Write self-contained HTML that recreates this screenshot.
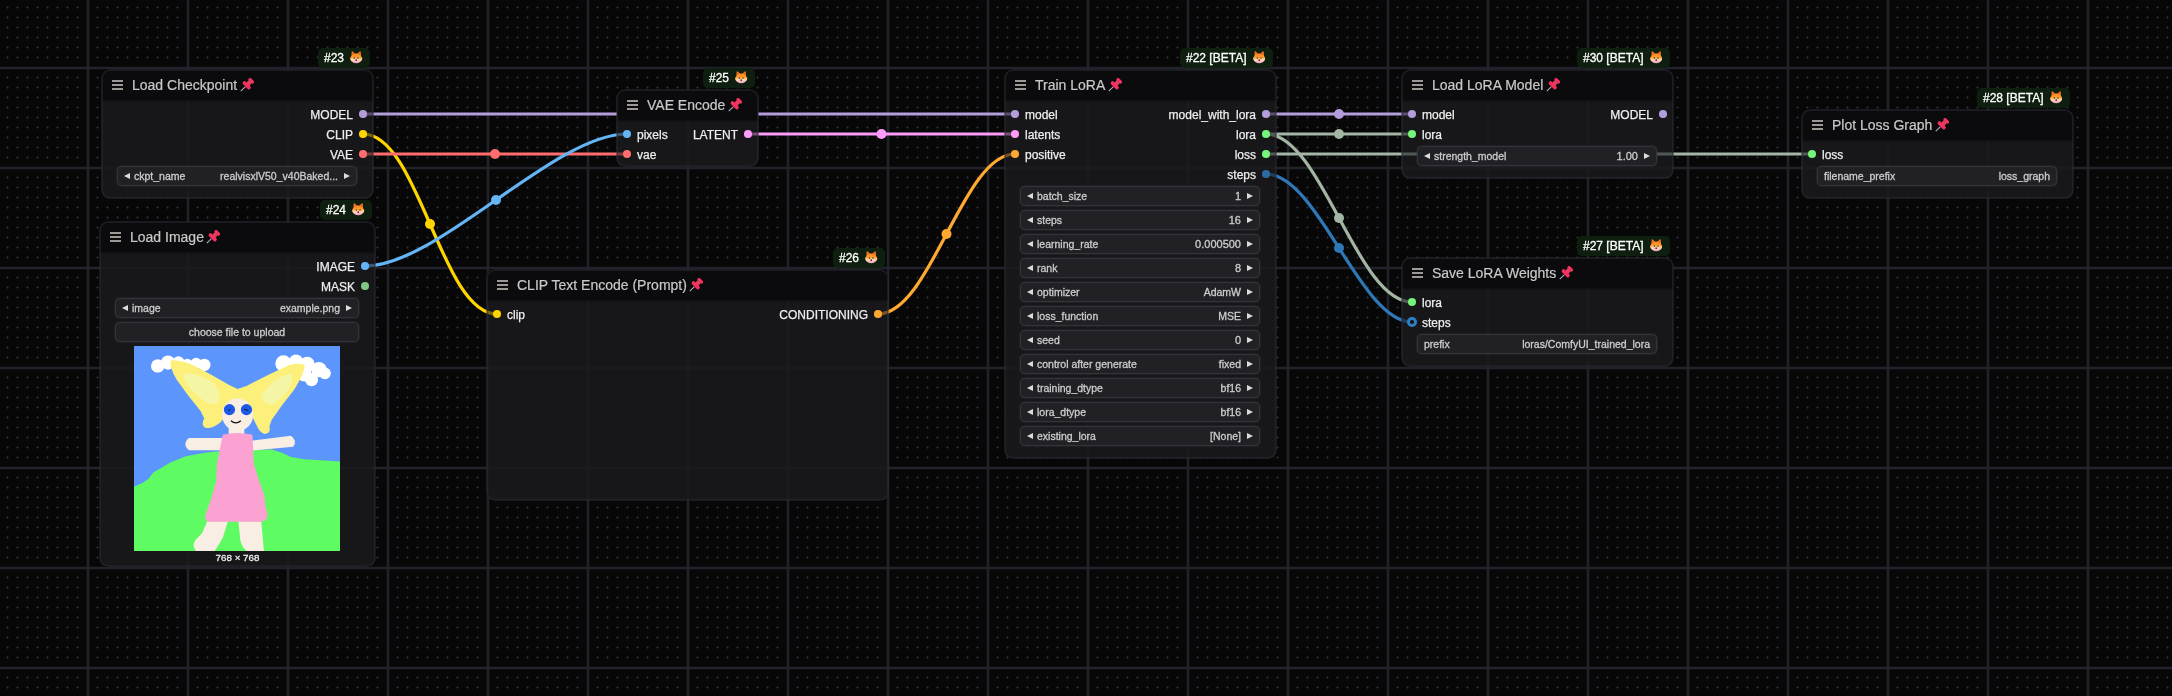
<!DOCTYPE html>
<html lang="en"><head><meta charset="utf-8"><title>ComfyUI - Train LoRA workflow</title>
<style>
html,body{margin:0;padding:0;}
body{width:2172px;height:696px;overflow:hidden;background:#070708;position:relative;font-family:"Liberation Sans",Arial,sans-serif;}
#grid,#links{position:absolute;left:0;top:0;width:2172px;height:696px;display:block;}
.node,.badge{will-change:transform;}
.node{position:absolute;box-sizing:border-box;border-radius:9px;overflow:hidden;}
.node:after{content:"";position:absolute;left:0;top:0;right:0;bottom:0;border:2px solid rgba(44,44,54,0.5);border-radius:9px;pointer-events:none;}
.node .title{position:absolute;left:1px;top:1px;right:1px;height:30px;background:#0b0b0d;}
.node .body{overflow:hidden;position:absolute;left:1px;top:31px;right:1px;bottom:1px;background:rgba(26,26,29,0.86);}
.node .body:before{content:"";position:absolute;left:0;right:0;top:0;height:2px;background:linear-gradient(rgba(11,11,13,0.8),rgba(11,11,13,0));}
.ham{position:absolute;left:10px;top:10.3px;width:11px;height:10px;}
.ham i{position:absolute;left:0;width:11px;height:1.5px;background:#9e9994;}
.tt{position:absolute;left:30px;top:0;height:30px;line-height:31px;font-size:14px;color:#c9c9c9;-webkit-text-stroke:0.2px #c9c9c9;white-space:nowrap;}
.pin{display:inline-block;vertical-align:middle;width:15px;height:15px;margin-left:1.5px;margin-top:-2px}
.sl{-webkit-text-stroke:0.25px #eee;position:absolute;font-size:12px;line-height:14px;color:#eeeeee;white-space:nowrap;}
.sl.in{left:20px;}
.sl.out{right:20px;text-align:right;}
.dot{position:absolute;border-radius:50%;}
.w{position:absolute;left:15px;height:20px;box-sizing:border-box;border:1px solid #34343d;border-radius:4.5px;background:#212125;box-shadow:0 0 0 1px rgba(52,52,61,0.3);font-size:10.5px;line-height:19px;color:#cccccc;-webkit-text-stroke:0.3px #ccc;white-space:nowrap;}
.w .l{position:absolute;left:16px;top:0;}
.w .v{position:absolute;right:18px;top:0;}
.w .v.n{font-size:11px;}
.w.na .l{left:6px;}
.w.na .v{right:6px;}
.w .c{position:absolute;left:0;right:0;top:0;text-align:center;}
.w .al,.w .ar{position:absolute;top:5.8px;width:0;height:0;border-top:3.6px solid transparent;border-bottom:3.6px solid transparent;}
.w .al{left:6px;border-right:6.4px solid #dcdcdc;}
.w .ar{right:5.6px;border-left:6.4px solid #dcdcdc;}
.badge{position:absolute;height:20px;box-sizing:border-box;border-radius:5px;background:#0e1f10;color:#fff;-webkit-text-stroke:0.3px #fff;font-size:12px;line-height:21px;padding:0 7.4px 0 6px;white-space:nowrap;}
.fox{display:inline-block;vertical-align:middle;width:12.4px;height:12.4px;margin-left:6.4px;margin-top:-3px;}
.ov{position:absolute;display:block;opacity:0.3;}
.dim{position:absolute;left:0;width:100%;text-align:center;font-size:9.8px;color:#eee;-webkit-text-stroke:0.3px #eee;line-height:12px;}
</style></head><body>
<svg id="grid" width="2172" height="696" viewBox="0 0 2172 696"><defs>
<pattern id="dp" x="0" y="0" width="10" height="10" patternUnits="userSpaceOnUse"><rect x="6" y="7" width="3" height="1" fill="#1f2025"/><rect x="7" y="6" width="1" height="3" fill="#1f2025"/><rect x="7" y="7" width="1" height="1" fill="#2b2c32"/></pattern>
<pattern id="lp" x="38" y="18" width="100" height="100" patternUnits="userSpaceOnUse"><rect x="46" y="0" width="7" height="100" fill="#070708"/><rect x="0" y="46" width="100" height="7" fill="#070708"/><rect x="49" y="0" width="2" height="100" fill="#22222b"/><rect x="0" y="49" width="100" height="2" fill="#22222b"/><rect x="48" y="0" width="1" height="100" fill="#22222b" opacity="0.25"/><rect x="51" y="0" width="1" height="100" fill="#22222b" opacity="0.25"/><rect x="0" y="48" width="100" height="1" fill="#22222b" opacity="0.25"/><rect x="0" y="51" width="100" height="1" fill="#22222b" opacity="0.25"/></pattern>
</defs><rect width="2172" height="696" fill="url(#dp)"/><rect width="2172" height="696" fill="url(#lp)"/></svg>
<svg id="links" width="2172" height="696" viewBox="0 0 2172 696" stroke-linecap="butt"><path d="M363 114 C526.0 114 852.0 114 1015 114" stroke="#B39DDB" stroke-width="3.2" fill="none"/><circle cx="689.0" cy="114.0" r="5" fill="#B39DDB"/><path d="M363 134 C419.1 134 440.9 314 497 314" stroke="#FFD500" stroke-width="3.2" fill="none"/><circle cx="430.0" cy="224.0" r="5" fill="#FFD500"/><path d="M363 154 C429.0 154 561.0 154 627 154" stroke="#FF6E6E" stroke-width="3.2" fill="none"/><circle cx="495.0" cy="154.0" r="5" fill="#FF6E6E"/><path d="M365 266 C438.3 266 553.7 134 627 134" stroke="#64B5F6" stroke-width="3.2" fill="none"/><circle cx="496.0" cy="200.0" r="5" fill="#64B5F6"/><path d="M748 134 C814.8 134 948.2 134 1015 134" stroke="#FF9CF9" stroke-width="3.2" fill="none"/><circle cx="881.5" cy="134.0" r="5" fill="#FF9CF9"/><path d="M878 314 C930.7 314 962.3 154 1015 154" stroke="#FFA931" stroke-width="3.2" fill="none"/><circle cx="946.5" cy="234.0" r="5" fill="#FFA931"/><path d="M1266 114 C1302.5 114 1375.5 114 1412 114" stroke="#B39DDB" stroke-width="3.2" fill="none"/><circle cx="1339.0" cy="114.0" r="5" fill="#B39DDB"/><path d="M1266 134 C1302.5 134 1375.5 134 1412 134" stroke="#a3b5a3" stroke-width="3.2" fill="none"/><circle cx="1339.0" cy="134.0" r="5" fill="#a3b5a3"/><path d="M1266 134 C1321.6 134 1356.4 302 1412 302" stroke="#a3b5a3" stroke-width="3.2" fill="none"/><circle cx="1339.0" cy="218.0" r="5" fill="#a3b5a3"/><path d="M1266 154 C1402.5 154 1675.5 154 1812 154" stroke="#a3b5a3" stroke-width="3.2" fill="none"/><circle cx="1539.0" cy="154.0" r="5" fill="#a3b5a3"/><path d="M1266 174 C1318.0 174 1360.0 322 1412 322" stroke="#2f78b8" stroke-width="3.2" fill="none"/><circle cx="1339.0" cy="248.0" r="5" fill="#2f78b8"/></svg>
<div class="badge" style="right:1802px;top:48px">#23<svg class="fox" viewBox="0 0 13 13"><defs><linearGradient id="fg" x1="0" y1="0" x2="0" y2="1"><stop offset="0" stop-color="#ff7a1a"/><stop offset="0.5" stop-color="#ff9d2c"/><stop offset="0.72" stop-color="#ffdcb4"/><stop offset="1" stop-color="#f59ac0"/></linearGradient></defs><path d="M2.5 0.3 Q1.9 0.1 1.8 0.9 L1.5 5.3 Q0.3 6.7 0 8.1 Q1.6 12.7 6.5 12.8 Q11.4 12.7 13 8.1 Q12.7 6.7 11.5 5.3 L11.2 0.9 Q11.1 0.1 10.5 0.3 L7.9 2.7 Q6.5 2.3 5.1 2.7 Z" fill="url(#fg)"/><path d="M2.6 1.5 L2.5 4.2 L4.4 3 Z M10.4 1.5 L10.5 4.2 L8.6 3 Z" fill="#f4511e"/><circle cx="4.6" cy="7.4" r="0.75" fill="#3a2a4a"/><circle cx="8.4" cy="7.4" r="0.75" fill="#3a2a4a"/><ellipse cx="6.5" cy="9.6" rx="0.8" ry="1" fill="#2a1a3a"/></svg></div>
<div class="node" style="left:101px;top:69px;width:273px;height:130px">
<div class="title"><div class="ham"><i style="top:0"></i><i style="top:4.1px"></i><i style="top:8.2px"></i></div><div class="tt">Load Checkpoint<svg class="pin" viewBox="0 0 15 15"><g transform="rotate(45 7.5 7.5)"><rect x="7" y="9" width="1" height="6.6" fill="#b9b2c0"/><rect x="4.2" y="-0.8" width="6.6" height="3" rx="1.3" fill="#f92f60"/><rect x="5.3" y="1.5" width="4.4" height="4.5" fill="#e0405f"/><rect x="2.6" y="5.4" width="9.8" height="3.6" rx="1.6" fill="#f92f60"/></g></svg></div></div>
<div class="body">
<svg class="ov" style="left:-102px;top:-100px" width="2172" height="696" viewBox="0 0 2172 696"><path d="M363 114 C526.0 114 852.0 114 1015 114" stroke="#B39DDB" stroke-width="3.2" fill="none"/><path d="M363 134 C419.1 134 440.9 314 497 314" stroke="#FFD500" stroke-width="3.2" fill="none"/><path d="M363 154 C429.0 154 561.0 154 627 154" stroke="#FF6E6E" stroke-width="3.2" fill="none"/></svg>
<div class="dot" style="right:6.2px;top:10.2px;width:7.6px;height:7.6px;background:#B39DDB"></div>
<div class="sl out" style="top:8px">MODEL</div>
<div class="dot" style="right:6.2px;top:30.2px;width:7.6px;height:7.6px;background:#FFD500"></div>
<div class="sl out" style="top:28px">CLIP</div>
<div class="dot" style="right:6.2px;top:50.2px;width:7.6px;height:7.6px;background:#FF6E6E"></div>
<div class="sl out" style="top:48px">VAE</div>
<div class="w" style="top:66px;width:240px"><span class="al"></span><span class="l">ckpt_name</span><span class="v">realvisxlV50_v40Baked...</span><span class="ar"></span></div>

</div></div><div class="badge" style="right:1800px;top:200px">#24<svg class="fox" viewBox="0 0 13 13"><path d="M2.5 0.3 Q1.9 0.1 1.8 0.9 L1.5 5.3 Q0.3 6.7 0 8.1 Q1.6 12.7 6.5 12.8 Q11.4 12.7 13 8.1 Q12.7 6.7 11.5 5.3 L11.2 0.9 Q11.1 0.1 10.5 0.3 L7.9 2.7 Q6.5 2.3 5.1 2.7 Z" fill="url(#fg)"/><path d="M2.6 1.5 L2.5 4.2 L4.4 3 Z M10.4 1.5 L10.5 4.2 L8.6 3 Z" fill="#f4511e"/><circle cx="4.6" cy="7.4" r="0.75" fill="#3a2a4a"/><circle cx="8.4" cy="7.4" r="0.75" fill="#3a2a4a"/><ellipse cx="6.5" cy="9.6" rx="0.8" ry="1" fill="#2a1a3a"/></svg></div>
<div class="node" style="left:99px;top:221px;width:277px;height:346px">
<div class="title"><div class="ham"><i style="top:0"></i><i style="top:4.1px"></i><i style="top:8.2px"></i></div><div class="tt">Load Image<svg class="pin" viewBox="0 0 15 15"><g transform="rotate(45 7.5 7.5)"><rect x="7" y="9" width="1" height="6.6" fill="#b9b2c0"/><rect x="4.2" y="-0.8" width="6.6" height="3" rx="1.3" fill="#f92f60"/><rect x="5.3" y="1.5" width="4.4" height="4.5" fill="#e0405f"/><rect x="2.6" y="5.4" width="9.8" height="3.6" rx="1.6" fill="#f92f60"/></g></svg></div></div>
<div class="body">
<svg class="ov" style="left:-100px;top:-252px" width="2172" height="696" viewBox="0 0 2172 696"><path d="M365 266 C438.3 266 553.7 134 627 134" stroke="#64B5F6" stroke-width="3.2" fill="none"/></svg>
<div class="dot" style="right:6.2px;top:10.2px;width:7.6px;height:7.6px;background:#64B5F6"></div>
<div class="sl out" style="top:8px">IMAGE</div>
<div class="dot" style="right:6.2px;top:30.2px;width:7.6px;height:7.6px;background:#81C784"></div>
<div class="sl out" style="top:28px">MASK</div>
<div class="w" style="top:46px;width:244px"><span class="al"></span><span class="l">image</span><span class="v">example.png</span><span class="ar"></span></div>
<div class="w" style="top:70px;width:244px"><span class="c">choose file to upload</span></div>
<div style="position:absolute;left:34px;top:94px;width:205px;height:205px"><svg width="206" height="205" viewBox="0 0 1392 1386" preserveAspectRatio="none" style="display:block"><rect width="1392" height="1386" fill="#5c96fc"/><g fill="#fff"><circle cx="160" cy="135" r="45"/><circle cx="230" cy="112" r="48"/><circle cx="300" cy="112" r="42"/><circle cx="360" cy="122" r="36"/><circle cx="420" cy="118" r="38"/><circle cx="475" cy="128" r="42"/><circle cx="1010" cy="118" r="55"/><circle cx="1095" cy="105" r="48"/><circle cx="1170" cy="125" r="52"/><circle cx="1250" cy="160" r="52"/><circle cx="1290" cy="185" r="40"/><circle cx="1200" cy="228" r="44"/><circle cx="1150" cy="190" r="50"/></g><path d="M0 951 L60 925 L100 896 L130 856 L250 786 L350 746 L480 721 L600 708 L810 704 L930 700 L1000 721 L1060 751 L1150 766 L1392 781 L1392 1386 L0 1386 Z" fill="#5efc62"/><path d="M250 96 Q300 92 380 120 Q520 190 640 262 L700 290 L760 270 Q900 195 1050 128 Q1110 112 1150 125 Q1165 160 1080 300 L1000 400 L930 500 L915 545 Q930 590 880 595 Q845 580 830 540 L800 480 L620 470 L585 515 Q520 565 480 552 Q450 530 475 490 L450 440 L370 340 L290 230 Q235 140 250 96 Z" fill="#fcf07a"/><path d="M345 185 Q420 180 520 240 Q590 290 575 365 Q550 405 500 385 Q420 340 360 260 Q325 205 345 185 Z" fill="#f5f5a6"/><path d="M1060 190 Q1085 220 1040 300 Q990 370 940 395 Q880 400 860 345 Q880 290 960 230 Q1020 190 1060 190 Z" fill="#f5f5a6"/><g fill="#f8eee4"><ellipse cx="700" cy="465" rx="105" ry="110"/><rect x="640" y="520" width="105" height="100"/><path d="M370 622 L600 622 L600 705 L370 705 Q322 664 370 622 Z"/><path d="M790 640 L1060 606 Q1108 640 1075 682 L790 708 Z"/><path d="M495 1185 L635 1185 L600 1296 L565 1356 L545 1386 L420 1386 Q385 1346 420 1306 L460 1266 Z"/><path d="M705 1185 L860 1185 L870 1296 L878 1386 L760 1386 Q715 1346 715 1276 Z"/></g><path d="M600 600 Q700 575 800 600 L810 796 L840 896 L880 1006 L890 1096 Q915 1146 890 1176 L860 1188 L500 1188 Q470 1166 485 1136 L520 1036 L555 916 L560 796 Z" fill="#fca2d2"/><circle cx="645" cy="430" r="38" fill="#1d59e6"/><circle cx="760" cy="430" r="38" fill="#1d59e6"/><circle cx="645" cy="433" r="6" fill="#123"/><path d="M745 428 L772 436" stroke="#123" stroke-width="7" fill="none"/><path d="M655 505 Q688 535 722 505" stroke="#111" stroke-width="9" fill="none"/></svg>
</div><div class="dim" style="top:300px">768 × 768</div>
</div></div><div class="badge" style="right:1417px;top:68px">#25<svg class="fox" viewBox="0 0 13 13"><path d="M2.5 0.3 Q1.9 0.1 1.8 0.9 L1.5 5.3 Q0.3 6.7 0 8.1 Q1.6 12.7 6.5 12.8 Q11.4 12.7 13 8.1 Q12.7 6.7 11.5 5.3 L11.2 0.9 Q11.1 0.1 10.5 0.3 L7.9 2.7 Q6.5 2.3 5.1 2.7 Z" fill="url(#fg)"/><path d="M2.6 1.5 L2.5 4.2 L4.4 3 Z M10.4 1.5 L10.5 4.2 L8.6 3 Z" fill="#f4511e"/><circle cx="4.6" cy="7.4" r="0.75" fill="#3a2a4a"/><circle cx="8.4" cy="7.4" r="0.75" fill="#3a2a4a"/><ellipse cx="6.5" cy="9.6" rx="0.8" ry="1" fill="#2a1a3a"/></svg></div>
<div class="node" style="left:616px;top:89px;width:143px;height:78px">
<div class="title"><div class="ham"><i style="top:0"></i><i style="top:4.1px"></i><i style="top:8.2px"></i></div><div class="tt">VAE Encode<svg class="pin" viewBox="0 0 15 15"><g transform="rotate(45 7.5 7.5)"><rect x="7" y="9" width="1" height="6.6" fill="#b9b2c0"/><rect x="4.2" y="-0.8" width="6.6" height="3" rx="1.3" fill="#f92f60"/><rect x="5.3" y="1.5" width="4.4" height="4.5" fill="#e0405f"/><rect x="2.6" y="5.4" width="9.8" height="3.6" rx="1.6" fill="#f92f60"/></g></svg></div></div>
<div class="body">
<svg class="ov" style="left:-617px;top:-120px" width="2172" height="696" viewBox="0 0 2172 696"><path d="M363 154 C429.0 154 561.0 154 627 154" stroke="#FF6E6E" stroke-width="3.2" fill="none"/><path d="M365 266 C438.3 266 553.7 134 627 134" stroke="#64B5F6" stroke-width="3.2" fill="none"/><path d="M748 134 C814.8 134 948.2 134 1015 134" stroke="#FF9CF9" stroke-width="3.2" fill="none"/></svg>
<div class="dot" style="left:5.9px;top:9.9px;width:8.2px;height:8.2px;background:#64B5F6"></div>
<div class="sl in" style="top:8px">pixels</div>
<div class="dot" style="left:5.9px;top:29.9px;width:8.2px;height:8.2px;background:#FF6E6E"></div>
<div class="sl in" style="top:28px">vae</div>
<div class="dot" style="right:6.2px;top:10.2px;width:7.6px;height:7.6px;background:#FF9CF9"></div>
<div class="sl out" style="top:8px">LATENT</div>

</div></div><div class="badge" style="right:1287px;top:248px">#26<svg class="fox" viewBox="0 0 13 13"><path d="M2.5 0.3 Q1.9 0.1 1.8 0.9 L1.5 5.3 Q0.3 6.7 0 8.1 Q1.6 12.7 6.5 12.8 Q11.4 12.7 13 8.1 Q12.7 6.7 11.5 5.3 L11.2 0.9 Q11.1 0.1 10.5 0.3 L7.9 2.7 Q6.5 2.3 5.1 2.7 Z" fill="url(#fg)"/><path d="M2.6 1.5 L2.5 4.2 L4.4 3 Z M10.4 1.5 L10.5 4.2 L8.6 3 Z" fill="#f4511e"/><circle cx="4.6" cy="7.4" r="0.75" fill="#3a2a4a"/><circle cx="8.4" cy="7.4" r="0.75" fill="#3a2a4a"/><ellipse cx="6.5" cy="9.6" rx="0.8" ry="1" fill="#2a1a3a"/></svg></div>
<div class="node" style="left:486px;top:269px;width:403px;height:232px">
<div class="title"><div class="ham"><i style="top:0"></i><i style="top:4.1px"></i><i style="top:8.2px"></i></div><div class="tt">CLIP Text Encode (Prompt)<svg class="pin" viewBox="0 0 15 15"><g transform="rotate(45 7.5 7.5)"><rect x="7" y="9" width="1" height="6.6" fill="#b9b2c0"/><rect x="4.2" y="-0.8" width="6.6" height="3" rx="1.3" fill="#f92f60"/><rect x="5.3" y="1.5" width="4.4" height="4.5" fill="#e0405f"/><rect x="2.6" y="5.4" width="9.8" height="3.6" rx="1.6" fill="#f92f60"/></g></svg></div></div>
<div class="body">
<svg class="ov" style="left:-487px;top:-300px" width="2172" height="696" viewBox="0 0 2172 696"><path d="M363 134 C419.1 134 440.9 314 497 314" stroke="#FFD500" stroke-width="3.2" fill="none"/><path d="M878 314 C930.7 314 962.3 154 1015 154" stroke="#FFA931" stroke-width="3.2" fill="none"/></svg>
<div class="dot" style="left:5.9px;top:9.9px;width:8.2px;height:8.2px;background:#FFD500"></div>
<div class="sl in" style="top:8px">clip</div>
<div class="dot" style="right:6.2px;top:10.2px;width:7.6px;height:7.6px;background:#FFA931"></div>
<div class="sl out" style="top:8px">CONDITIONING</div>

</div></div><div class="badge" style="right:899px;top:48px">#22 [BETA]<svg class="fox" viewBox="0 0 13 13"><path d="M2.5 0.3 Q1.9 0.1 1.8 0.9 L1.5 5.3 Q0.3 6.7 0 8.1 Q1.6 12.7 6.5 12.8 Q11.4 12.7 13 8.1 Q12.7 6.7 11.5 5.3 L11.2 0.9 Q11.1 0.1 10.5 0.3 L7.9 2.7 Q6.5 2.3 5.1 2.7 Z" fill="url(#fg)"/><path d="M2.6 1.5 L2.5 4.2 L4.4 3 Z M10.4 1.5 L10.5 4.2 L8.6 3 Z" fill="#f4511e"/><circle cx="4.6" cy="7.4" r="0.75" fill="#3a2a4a"/><circle cx="8.4" cy="7.4" r="0.75" fill="#3a2a4a"/><ellipse cx="6.5" cy="9.6" rx="0.8" ry="1" fill="#2a1a3a"/></svg></div>
<div class="node" style="left:1004px;top:69px;width:273px;height:390px">
<div class="title"><div class="ham"><i style="top:0"></i><i style="top:4.1px"></i><i style="top:8.2px"></i></div><div class="tt">Train LoRA<svg class="pin" viewBox="0 0 15 15"><g transform="rotate(45 7.5 7.5)"><rect x="7" y="9" width="1" height="6.6" fill="#b9b2c0"/><rect x="4.2" y="-0.8" width="6.6" height="3" rx="1.3" fill="#f92f60"/><rect x="5.3" y="1.5" width="4.4" height="4.5" fill="#e0405f"/><rect x="2.6" y="5.4" width="9.8" height="3.6" rx="1.6" fill="#f92f60"/></g></svg></div></div>
<div class="body">
<svg class="ov" style="left:-1005px;top:-100px" width="2172" height="696" viewBox="0 0 2172 696"><path d="M363 114 C526.0 114 852.0 114 1015 114" stroke="#B39DDB" stroke-width="3.2" fill="none"/><path d="M748 134 C814.8 134 948.2 134 1015 134" stroke="#FF9CF9" stroke-width="3.2" fill="none"/><path d="M878 314 C930.7 314 962.3 154 1015 154" stroke="#FFA931" stroke-width="3.2" fill="none"/><path d="M1266 114 C1302.5 114 1375.5 114 1412 114" stroke="#B39DDB" stroke-width="3.2" fill="none"/><path d="M1266 134 C1302.5 134 1375.5 134 1412 134" stroke="#a3b5a3" stroke-width="3.2" fill="none"/><path d="M1266 134 C1321.6 134 1356.4 302 1412 302" stroke="#a3b5a3" stroke-width="3.2" fill="none"/><path d="M1266 154 C1402.5 154 1675.5 154 1812 154" stroke="#a3b5a3" stroke-width="3.2" fill="none"/><path d="M1266 174 C1318.0 174 1360.0 322 1412 322" stroke="#2f78b8" stroke-width="3.2" fill="none"/></svg>
<div class="dot" style="left:5.9px;top:9.9px;width:8.2px;height:8.2px;background:#B39DDB"></div>
<div class="sl in" style="top:8px">model</div>
<div class="dot" style="left:5.9px;top:29.9px;width:8.2px;height:8.2px;background:#FF9CF9"></div>
<div class="sl in" style="top:28px">latents</div>
<div class="dot" style="left:5.9px;top:49.9px;width:8.2px;height:8.2px;background:#FFA931"></div>
<div class="sl in" style="top:48px">positive</div>
<div class="dot" style="right:6.2px;top:10.2px;width:7.6px;height:7.6px;background:#B39DDB"></div>
<div class="sl out" style="top:8px">model_with_lora</div>
<div class="dot" style="right:6.2px;top:30.2px;width:7.6px;height:7.6px;background:#77F57A"></div>
<div class="sl out" style="top:28px">lora</div>
<div class="dot" style="right:6.2px;top:50.2px;width:7.6px;height:7.6px;background:#77F57A"></div>
<div class="sl out" style="top:48px">loss</div>
<div class="dot" style="right:6.2px;top:70.2px;width:7.6px;height:7.6px;background:#2b6aa2"></div>
<div class="sl out" style="top:68px">steps</div>
<div class="w" style="top:86px;width:240px"><span class="al"></span><span class="l">batch_size</span><span class="v n">1</span><span class="ar"></span></div>
<div class="w" style="top:110px;width:240px"><span class="al"></span><span class="l">steps</span><span class="v n">16</span><span class="ar"></span></div>
<div class="w" style="top:134px;width:240px"><span class="al"></span><span class="l">learning_rate</span><span class="v n">0.000500</span><span class="ar"></span></div>
<div class="w" style="top:158px;width:240px"><span class="al"></span><span class="l">rank</span><span class="v n">8</span><span class="ar"></span></div>
<div class="w" style="top:182px;width:240px"><span class="al"></span><span class="l">optimizer</span><span class="v">AdamW</span><span class="ar"></span></div>
<div class="w" style="top:206px;width:240px"><span class="al"></span><span class="l">loss_function</span><span class="v">MSE</span><span class="ar"></span></div>
<div class="w" style="top:230px;width:240px"><span class="al"></span><span class="l">seed</span><span class="v n">0</span><span class="ar"></span></div>
<div class="w" style="top:254px;width:240px"><span class="al"></span><span class="l">control after generate</span><span class="v">fixed</span><span class="ar"></span></div>
<div class="w" style="top:278px;width:240px"><span class="al"></span><span class="l">training_dtype</span><span class="v">bf16</span><span class="ar"></span></div>
<div class="w" style="top:302px;width:240px"><span class="al"></span><span class="l">lora_dtype</span><span class="v">bf16</span><span class="ar"></span></div>
<div class="w" style="top:326px;width:240px"><span class="al"></span><span class="l">existing_lora</span><span class="v">[None]</span><span class="ar"></span></div>

</div></div><div class="badge" style="right:502px;top:48px">#30 [BETA]<svg class="fox" viewBox="0 0 13 13"><path d="M2.5 0.3 Q1.9 0.1 1.8 0.9 L1.5 5.3 Q0.3 6.7 0 8.1 Q1.6 12.7 6.5 12.8 Q11.4 12.7 13 8.1 Q12.7 6.7 11.5 5.3 L11.2 0.9 Q11.1 0.1 10.5 0.3 L7.9 2.7 Q6.5 2.3 5.1 2.7 Z" fill="url(#fg)"/><path d="M2.6 1.5 L2.5 4.2 L4.4 3 Z M10.4 1.5 L10.5 4.2 L8.6 3 Z" fill="#f4511e"/><circle cx="4.6" cy="7.4" r="0.75" fill="#3a2a4a"/><circle cx="8.4" cy="7.4" r="0.75" fill="#3a2a4a"/><ellipse cx="6.5" cy="9.6" rx="0.8" ry="1" fill="#2a1a3a"/></svg></div>
<div class="node" style="left:1401px;top:69px;width:273px;height:110px">
<div class="title"><div class="ham"><i style="top:0"></i><i style="top:4.1px"></i><i style="top:8.2px"></i></div><div class="tt">Load LoRA Model<svg class="pin" viewBox="0 0 15 15"><g transform="rotate(45 7.5 7.5)"><rect x="7" y="9" width="1" height="6.6" fill="#b9b2c0"/><rect x="4.2" y="-0.8" width="6.6" height="3" rx="1.3" fill="#f92f60"/><rect x="5.3" y="1.5" width="4.4" height="4.5" fill="#e0405f"/><rect x="2.6" y="5.4" width="9.8" height="3.6" rx="1.6" fill="#f92f60"/></g></svg></div></div>
<div class="body">
<svg class="ov" style="left:-1402px;top:-100px" width="2172" height="696" viewBox="0 0 2172 696"><path d="M1266 114 C1302.5 114 1375.5 114 1412 114" stroke="#B39DDB" stroke-width="3.2" fill="none"/><path d="M1266 134 C1302.5 134 1375.5 134 1412 134" stroke="#a3b5a3" stroke-width="3.2" fill="none"/><path d="M1266 154 C1402.5 154 1675.5 154 1812 154" stroke="#a3b5a3" stroke-width="3.2" fill="none"/></svg>
<div class="dot" style="left:5.9px;top:9.9px;width:8.2px;height:8.2px;background:#B39DDB"></div>
<div class="sl in" style="top:8px">model</div>
<div class="dot" style="left:5.9px;top:29.9px;width:8.2px;height:8.2px;background:#77F57A"></div>
<div class="sl in" style="top:28px">lora</div>
<div class="dot" style="right:6.2px;top:10.2px;width:7.6px;height:7.6px;background:#B39DDB"></div>
<div class="sl out" style="top:8px">MODEL</div>
<div class="w" style="top:46px;width:240px"><span class="al"></span><span class="l">strength_model</span><span class="v n">1.00</span><span class="ar"></span></div>

</div></div><div class="badge" style="right:502px;top:236px">#27 [BETA]<svg class="fox" viewBox="0 0 13 13"><path d="M2.5 0.3 Q1.9 0.1 1.8 0.9 L1.5 5.3 Q0.3 6.7 0 8.1 Q1.6 12.7 6.5 12.8 Q11.4 12.7 13 8.1 Q12.7 6.7 11.5 5.3 L11.2 0.9 Q11.1 0.1 10.5 0.3 L7.9 2.7 Q6.5 2.3 5.1 2.7 Z" fill="url(#fg)"/><path d="M2.6 1.5 L2.5 4.2 L4.4 3 Z M10.4 1.5 L10.5 4.2 L8.6 3 Z" fill="#f4511e"/><circle cx="4.6" cy="7.4" r="0.75" fill="#3a2a4a"/><circle cx="8.4" cy="7.4" r="0.75" fill="#3a2a4a"/><ellipse cx="6.5" cy="9.6" rx="0.8" ry="1" fill="#2a1a3a"/></svg></div>
<div class="node" style="left:1401px;top:257px;width:273px;height:110px">
<div class="title"><div class="ham"><i style="top:0"></i><i style="top:4.1px"></i><i style="top:8.2px"></i></div><div class="tt">Save LoRA Weights<svg class="pin" viewBox="0 0 15 15"><g transform="rotate(45 7.5 7.5)"><rect x="7" y="9" width="1" height="6.6" fill="#b9b2c0"/><rect x="4.2" y="-0.8" width="6.6" height="3" rx="1.3" fill="#f92f60"/><rect x="5.3" y="1.5" width="4.4" height="4.5" fill="#e0405f"/><rect x="2.6" y="5.4" width="9.8" height="3.6" rx="1.6" fill="#f92f60"/></g></svg></div></div>
<div class="body">
<svg class="ov" style="left:-1402px;top:-288px" width="2172" height="696" viewBox="0 0 2172 696"><path d="M1266 134 C1321.6 134 1356.4 302 1412 302" stroke="#a3b5a3" stroke-width="3.2" fill="none"/><path d="M1266 174 C1318.0 174 1360.0 322 1412 322" stroke="#2f78b8" stroke-width="3.2" fill="none"/></svg>
<div class="dot" style="left:5.9px;top:9.9px;width:8.2px;height:8.2px;background:#77F57A"></div>
<div class="sl in" style="top:8px">lora</div>
<div class="dot" style="left:5.3px;top:29.3px;width:9.4px;height:9.4px;box-sizing:border-box;border:3.3px solid #2c7fc0;background:#15151a"></div>
<div class="sl in" style="top:28px">steps</div>
<div class="w na" style="top:46px;width:240px"><span class="l">prefix</span><span class="v">loras/ComfyUI_trained_lora</span></div>

</div></div><div class="badge" style="right:102px;top:88px">#28 [BETA]<svg class="fox" viewBox="0 0 13 13"><path d="M2.5 0.3 Q1.9 0.1 1.8 0.9 L1.5 5.3 Q0.3 6.7 0 8.1 Q1.6 12.7 6.5 12.8 Q11.4 12.7 13 8.1 Q12.7 6.7 11.5 5.3 L11.2 0.9 Q11.1 0.1 10.5 0.3 L7.9 2.7 Q6.5 2.3 5.1 2.7 Z" fill="url(#fg)"/><path d="M2.6 1.5 L2.5 4.2 L4.4 3 Z M10.4 1.5 L10.5 4.2 L8.6 3 Z" fill="#f4511e"/><circle cx="4.6" cy="7.4" r="0.75" fill="#3a2a4a"/><circle cx="8.4" cy="7.4" r="0.75" fill="#3a2a4a"/><ellipse cx="6.5" cy="9.6" rx="0.8" ry="1" fill="#2a1a3a"/></svg></div>
<div class="node" style="left:1801px;top:109px;width:273px;height:90px">
<div class="title"><div class="ham"><i style="top:0"></i><i style="top:4.1px"></i><i style="top:8.2px"></i></div><div class="tt">Plot Loss Graph<svg class="pin" viewBox="0 0 15 15"><g transform="rotate(45 7.5 7.5)"><rect x="7" y="9" width="1" height="6.6" fill="#b9b2c0"/><rect x="4.2" y="-0.8" width="6.6" height="3" rx="1.3" fill="#f92f60"/><rect x="5.3" y="1.5" width="4.4" height="4.5" fill="#e0405f"/><rect x="2.6" y="5.4" width="9.8" height="3.6" rx="1.6" fill="#f92f60"/></g></svg></div></div>
<div class="body">
<svg class="ov" style="left:-1802px;top:-140px" width="2172" height="696" viewBox="0 0 2172 696"><path d="M1266 154 C1402.5 154 1675.5 154 1812 154" stroke="#a3b5a3" stroke-width="3.2" fill="none"/></svg>
<div class="dot" style="left:5.9px;top:9.9px;width:8.2px;height:8.2px;background:#77F57A"></div>
<div class="sl in" style="top:8px">loss</div>
<div class="w na" style="top:26px;width:240px"><span class="l">filename_prefix</span><span class="v">loss_graph</span></div>

</div></div>
</body></html>
